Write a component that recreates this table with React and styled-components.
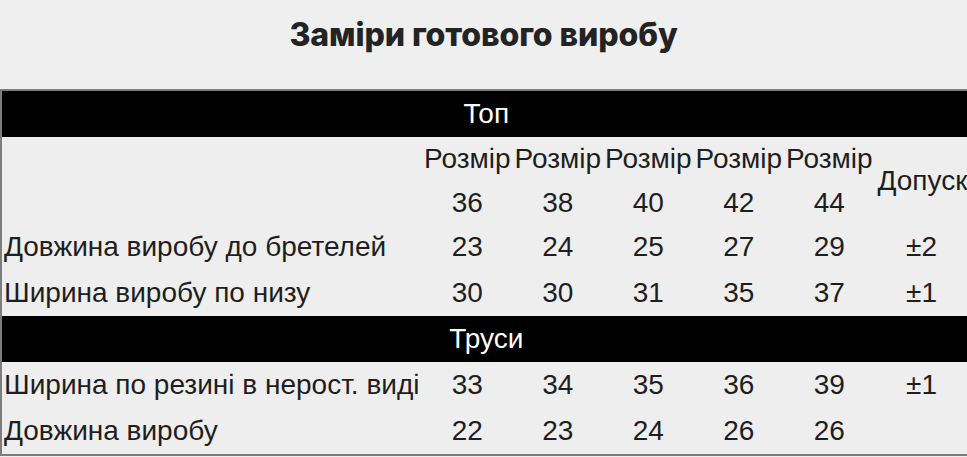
import React from 'react';
import styled, { createGlobalStyle } from 'styled-components';

const GlobalStyle = createGlobalStyle`
  html, body {
    margin: 0;
    padding: 0;
    background: #efefef;
    overflow: hidden;
  }
`;

const sizes = [36, 38, 40, 42, 44];

const sections = [
  {
    title: 'Топ',
    withHead: true,
    rows: [
      { label: 'Довжина виробу до бретелей', values: [23, 24, 25, 27, 29], tol: '±2' },
      { label: 'Ширина виробу по низу', values: [30, 30, 31, 35, 37], tol: '±1' }
    ]
  },
  {
    title: 'Труси',
    rows: [
      { label: 'Ширина по резині в нерост. виді', values: [33, 34, 35, 36, 39], tol: '±1' },
      { label: 'Довжина виробу', values: [22, 23, 24, 26, 26], tol: '' }
    ]
  }
];

function App() {
  return (
    <Page>
      <GlobalStyle />
      <Title>Заміри готового виробу</Title>
      <Table>
        {sections.map((s) => (
          <React.Fragment key={s.title}>
            <SectionRow>{s.title}</SectionRow>
            {s.withHead && (
              <>
                <Cell $row="span 2" />
                {sizes.map((n) => (
                  <HeadCell key={'h' + n}>Розмір</HeadCell>
                ))}
                <TolHead>Допуск</TolHead>
                {sizes.map((n) => (
                  <Cell key={'s' + n}>{n}</Cell>
                ))}
              </>
            )}
            {s.rows.map((r) => (
              <React.Fragment key={r.label}>
                <LabelCell>{r.label}</LabelCell>
                {r.values.map((v, i) => (
                  <Cell key={i}>{v}</Cell>
                ))}
                <Cell>{r.tol}</Cell>
              </React.Fragment>
            ))}
          </React.Fragment>
        ))}
      </Table>
    </Page>
  );
}

export default App;

const Page = styled.div`
  width: 967px;
  height: 457px;
  overflow: hidden;
  font-family: 'Liberation Sans', Arial, sans-serif;
`;

const Title = styled.h2`
  margin: 0;
  height: 89px;
  padding-top: 14px;
  box-sizing: border-box;
  text-align: center;
  font-family: Inter, 'Noto Sans', sans-serif;
  font-weight: 800;
  font-size: 32px;
  line-height: 42px;
  letter-spacing: -0.1px;
  color: #232323;
`;

const Table = styled.div`
  display: grid;
  grid-template-columns: 420px repeat(5, 90.5px) 94px;
  grid-template-rows: 46px 44px 43px 46px 46px 46px 46px 46px;
  width: 972px;
  border: 2px solid #7d7d7d;
  border-right: none;
  background: #eeeeee;
  color: #1e1e1e;
  font-size: 28px;
`;

const SectionRow = styled.div`
  grid-column: 1 / -1;
  display: flex;
  align-items: center;
  justify-content: center;
  background: #000;
  color: #fff;
  padding-left: 2px;
`;

const Cell = styled.div`
  display: flex;
  align-items: center;
  justify-content: center;
  ${(p) => p.$row && `grid-row: ${p.$row};`}
`;

const LabelCell = styled(Cell)`
  justify-content: flex-start;
  padding-left: 2px;
  white-space: nowrap;
`;

const HeadCell = styled(Cell)`
  white-space: nowrap;
`;

const TolHead = styled(Cell)`
  grid-row: span 2;
  justify-content: flex-start;
  padding-left: 3px;
  white-space: nowrap;
`;
